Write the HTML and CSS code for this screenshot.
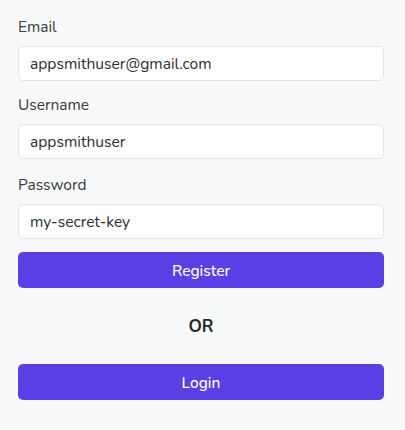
FILE: index.html
```html
<!DOCTYPE html>
<html lang="en">
<head>
<meta charset="utf-8">
<title>Register</title>
<link rel="stylesheet" href="styles.css">
</head>
<body>
<main class="form">
  <div class="field">
    <label class="label" for="email">Email</label>
    <input class="input" id="email" type="text" value="appsmithuser@gmail.com">
  </div>
  <div class="field field-mid">
    <label class="label" for="username">Username</label>
    <input class="input" id="username" type="text" value="appsmithuser">
  </div>
  <div class="field field-last">
    <label class="label" for="password">Password</label>
    <input class="input" id="password" type="text" value="my-secret-key">
  </div>
  <button class="btn" type="button">Register</button>
  <div class="or">OR</div>
  <button class="btn" type="button">Login</button>
</main>
</body>
</html>
```

FILE: styles.css
```css
html, body {
  margin: 0;
  padding: 0;
  background: #f8f9fb;
}
body {
  font-family: "Nunito", "Lato", "Noto Sans", sans-serif;
  color: #333333;
  width: 405px;
  height: 430px;
  overflow: hidden;
}
.form {
  display: flex;
  flex-direction: column;
  padding: 17px 21px 0 18px;
}
.field {
  display: flex;
  flex-direction: column;
  margin-bottom: 14px;
}
.field-mid {
  margin-bottom: 16px;
}
.field-last {
  margin-bottom: 13px;
}
.label {
  font-size: 15.5px;
  line-height: 20px;
  height: 20px;
  margin-bottom: 9px;
  color: #3a3a3a;
}
.input {
  box-sizing: border-box;
  height: 35px;
  width: 100%;
  margin: 0;
  padding: 0 11px;
  border: 1px solid #e4e4e7;
  border-radius: 5px;
  background: #ffffff;
  font-family: inherit;
  font-size: 15.6px;
  color: #2e2e2e;
  outline: none;
}
.btn {
  box-sizing: border-box;
  height: 36px;
  width: 100%;
  margin: 0;
  border: none;
  border-radius: 5px;
  background: #5a3fe4;
  color: #ffffff;
  font-family: inherit;
  font-size: 15.5px;
  font-weight: 500;
  cursor: pointer;
}
.or {
  height: 76px;
  display: flex;
  align-items: center;
  justify-content: center;
  font-size: 17px;
  font-weight: 700;
  color: #262626;
}
```
